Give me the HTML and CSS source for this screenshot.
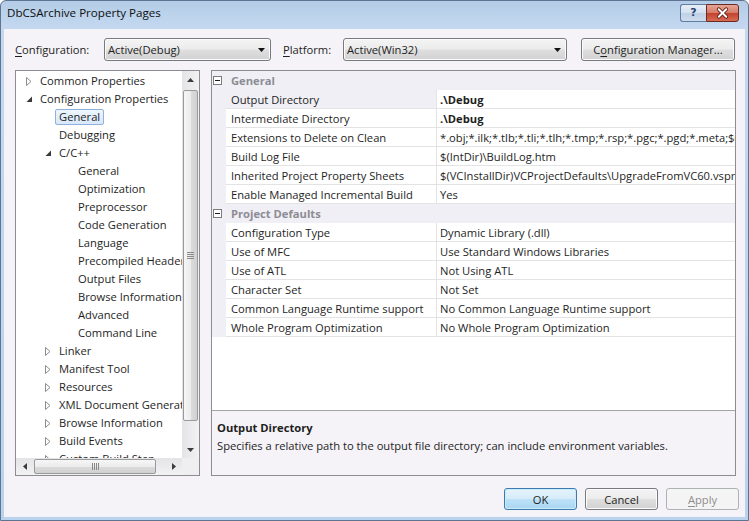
FILE: index.html
```html
<!DOCTYPE html>
<html>
<head>
<meta charset="utf-8">
<title>DbCSArchive Property Pages</title>
<link rel="stylesheet" href="styles.css">
</head>
<body>
<div class="window">
  <div class="titlebar">
    <div class="title">DbCSArchive Property Pages</div>
    <div class="caps">
      <div class="cap help">?</div>
      <div class="cap close">
        <svg width="33" height="18" viewBox="0 0 33 18">
          <path d="M12.5 5 L20.5 13 M20.5 5 L12.5 13" stroke="#5a1408" stroke-width="4" stroke-linecap="round"/>
          <path d="M12.5 5 L20.5 13 M20.5 5 L12.5 13" stroke="#ffffff" stroke-width="2.2" stroke-linecap="round"/>
        </svg>
      </div>
    </div>
  </div>
  <div class="client">
    <div class="config-row">
      <div class="lbl lbl-cfg"><u>C</u>onfiguration:</div>
      <div class="combo combo-cfg"><span class="combo-text">Active(Debug)</span><svg class="drop" width="7" height="4" viewBox="0 0 7 4"><path d="M0 0 L7 0 L3.5 4 Z" fill="#111"/></svg></div>
      <div class="lbl lbl-plat"><u>P</u>latform:</div>
      <div class="combo combo-plat"><span class="combo-text">Active(Win32)</span><svg class="drop" width="7" height="4" viewBox="0 0 7 4"><path d="M0 0 L7 0 L3.5 4 Z" fill="#111"/></svg></div>
      <div class="btn btn-mgr">C<u>o</u>nfiguration Manager...</div>
    </div>

    <div class="main">
      <div class="tree">
        <div class="tree-items">
          <div class="trow lv0"><span class="exp"><svg width="6" height="9" viewBox="0 0 6 9"><path d="M0.5 0.5 L5 4.5 L0.5 8.5 Z" fill="#fff" stroke="#8c8c8c"/></svg></span><span class="tlabel">Common Properties</span></div>
          <div class="trow lv0"><span class="exp open"><svg width="7" height="7" viewBox="0 0 7 7"><path d="M6 0.5 L6 6 L0.5 6 Z" fill="#3a3a3a"/></svg></span><span class="tlabel">Configuration Properties</span></div>
          <div class="trow lv1"><span class="exp"></span><span class="tlabel selected">General</span></div>
          <div class="trow lv1"><span class="exp"></span><span class="tlabel">Debugging</span></div>
          <div class="trow lv1"><span class="exp open"><svg width="7" height="7" viewBox="0 0 7 7"><path d="M6 0.5 L6 6 L0.5 6 Z" fill="#3a3a3a"/></svg></span><span class="tlabel">C/C++</span></div>
          <div class="trow lv2"><span class="exp"></span><span class="tlabel">General</span></div>
          <div class="trow lv2"><span class="exp"></span><span class="tlabel">Optimization</span></div>
          <div class="trow lv2"><span class="exp"></span><span class="tlabel">Preprocessor</span></div>
          <div class="trow lv2"><span class="exp"></span><span class="tlabel">Code Generation</span></div>
          <div class="trow lv2"><span class="exp"></span><span class="tlabel">Language</span></div>
          <div class="trow lv2"><span class="exp"></span><span class="tlabel">Precompiled Headers</span></div>
          <div class="trow lv2"><span class="exp"></span><span class="tlabel">Output Files</span></div>
          <div class="trow lv2"><span class="exp"></span><span class="tlabel">Browse Information</span></div>
          <div class="trow lv2"><span class="exp"></span><span class="tlabel">Advanced</span></div>
          <div class="trow lv2"><span class="exp"></span><span class="tlabel">Command Line</span></div>
          <div class="trow lv1"><span class="exp"><svg width="6" height="9" viewBox="0 0 6 9"><path d="M0.5 0.5 L5 4.5 L0.5 8.5 Z" fill="#fff" stroke="#8c8c8c"/></svg></span><span class="tlabel">Linker</span></div>
          <div class="trow lv1"><span class="exp"><svg width="6" height="9" viewBox="0 0 6 9"><path d="M0.5 0.5 L5 4.5 L0.5 8.5 Z" fill="#fff" stroke="#8c8c8c"/></svg></span><span class="tlabel">Manifest Tool</span></div>
          <div class="trow lv1"><span class="exp"><svg width="6" height="9" viewBox="0 0 6 9"><path d="M0.5 0.5 L5 4.5 L0.5 8.5 Z" fill="#fff" stroke="#8c8c8c"/></svg></span><span class="tlabel">Resources</span></div>
          <div class="trow lv1"><span class="exp"><svg width="6" height="9" viewBox="0 0 6 9"><path d="M0.5 0.5 L5 4.5 L0.5 8.5 Z" fill="#fff" stroke="#8c8c8c"/></svg></span><span class="tlabel">XML Document Generator</span></div>
          <div class="trow lv1"><span class="exp"><svg width="6" height="9" viewBox="0 0 6 9"><path d="M0.5 0.5 L5 4.5 L0.5 8.5 Z" fill="#fff" stroke="#8c8c8c"/></svg></span><span class="tlabel">Browse Information</span></div>
          <div class="trow lv1"><span class="exp"><svg width="6" height="9" viewBox="0 0 6 9"><path d="M0.5 0.5 L5 4.5 L0.5 8.5 Z" fill="#fff" stroke="#8c8c8c"/></svg></span><span class="tlabel">Build Events</span></div>
          <div class="trow lv1"><span class="exp"><svg width="6" height="9" viewBox="0 0 6 9"><path d="M0.5 0.5 L5 4.5 L0.5 8.5 Z" fill="#fff" stroke="#8c8c8c"/></svg></span><span class="tlabel">Custom Build Step</span></div>
        </div>
        <div class="vscroll">
          <div class="sb-btn"><svg width="7" height="4" viewBox="0 0 7 4"><path d="M3.5 0 L7 4 L0 4 Z" fill="#3c3c3c"/></svg></div>
          <div class="sb-track">
            <div class="thumb-v">
              <svg width="7" height="7" viewBox="0 0 7 7"><path d="M0 0.5 H7 M0 2.5 H7 M0 4.5 H7 M0 6.5 H7" stroke="#8a8a8a" stroke-width="1"/></svg>
            </div>
          </div>
          <div class="sb-btn"><svg width="7" height="4" viewBox="0 0 7 4"><path d="M0 0 L7 0 L3.5 4 Z" fill="#3c3c3c"/></svg></div>
        </div>
        <div class="hscroll">
          <div class="sb-btn"><svg width="4" height="7" viewBox="0 0 4 7"><path d="M0 3.5 L4 0 L4 7 Z" fill="#3c3c3c"/></svg></div>
          <div class="sb-track-h">
            <div class="thumb-h">
              <svg width="7" height="7" viewBox="0 0 7 7"><path d="M0.5 0 V7 M2.5 0 V7 M4.5 0 V7 M6.5 0 V7" stroke="#8a8a8a" stroke-width="1"/></svg>
            </div>
          </div>
          <div class="sb-btn"><svg width="4" height="7" viewBox="0 0 4 7"><path d="M0 0 L4 3.5 L0 7 Z" fill="#3c3c3c"/></svg></div>
        </div>
        <div class="corner"></div>
      </div>

      <div class="props">
        <div class="grid">
          <div class="grow cat"><div class="gut"><span class="box"></span></div><div class="catname">General</div></div>
          <div class="grow"><div class="gut"></div><div class="gname sel">Output Directory</div><div class="gval b">.\Debug</div></div>
          <div class="grow"><div class="gut"></div><div class="gname">Intermediate Directory</div><div class="gval b">.\Debug</div></div>
          <div class="grow"><div class="gut"></div><div class="gname">Extensions to Delete on Clean</div><div class="gval">*.obj;*.ilk;*.tlb;*.tli;*.tlh;*.tmp;*.rsp;*.pgc;*.pgd;*.meta;$(TargetPath)</div></div>
          <div class="grow"><div class="gut"></div><div class="gname">Build Log File</div><div class="gval">$(IntDir)\BuildLog.htm</div></div>
          <div class="grow"><div class="gut"></div><div class="gname">Inherited Project Property Sheets</div><div class="gval">$(VCInstallDir)VCProjectDefaults\UpgradeFromVC60.vsprops</div></div>
          <div class="grow"><div class="gut"></div><div class="gname">Enable Managed Incremental Build</div><div class="gval">Yes</div></div>
          <div class="grow cat"><div class="gut"><span class="box"></span></div><div class="catname">Project Defaults</div></div>
          <div class="grow"><div class="gut"></div><div class="gname">Configuration Type</div><div class="gval">Dynamic Library (.dll)</div></div>
          <div class="grow"><div class="gut"></div><div class="gname">Use of MFC</div><div class="gval">Use Standard Windows Libraries</div></div>
          <div class="grow"><div class="gut"></div><div class="gname">Use of ATL</div><div class="gval">Not Using ATL</div></div>
          <div class="grow"><div class="gut"></div><div class="gname">Character Set</div><div class="gval">Not Set</div></div>
          <div class="grow"><div class="gut"></div><div class="gname">Common Language Runtime support</div><div class="gval">No Common Language Runtime support</div></div>
          <div class="grow"><div class="gut"></div><div class="gname">Whole Program Optimization</div><div class="gval">No Whole Program Optimization</div></div>
        </div>
        <div class="desc">
          <div class="desc-title">Output Directory</div>
          <div class="desc-text">Specifies a relative path to the output file directory; can include environment variables.</div>
        </div>
      </div>
    </div>

    <div class="button-row">
      <div class="btn btn-dlg btn-ok">OK</div>
      <div class="btn btn-dlg">Cancel</div>
      <div class="btn btn-dlg btn-disabled"><u>A</u>pply</div>
    </div>
  </div>
</div>
</body>
</html>
```

FILE: styles.css
```css
* { box-sizing: border-box; }
html, body { margin: 0; padding: 0; }
body {
  width: 749px;
  height: 521px;
  overflow: hidden;
  font-family: "Open Sans", "Noto Sans", sans-serif;
  font-size: 11.2px;
  color: #1e1e1e;
  background: #ffffff;
}
u { text-decoration: underline; text-underline-offset: 2px; }

.window {
  width: 749px;
  height: 521px;
  display: flex;
  flex-direction: column;
  border: 1px solid #5d7590;
  border-radius: 6px 6px 0 0;
  background: linear-gradient(#b4cce7, #c4d9f0 28px, #b9d3ee);
}

/* title bar */
.titlebar {
  height: 28px;
  flex: none;
  display: flex;
  justify-content: space-between;
  align-items: flex-start;
  padding: 3px 9px 0 6px;
}
.title {
  font-size: 11.6px;
  line-height: 18px;
  color: #0f0f0f;
}
.caps { display: flex; }
.cap {
  height: 18px;
  border: 1px solid #5f7ea3;
  display: flex;
  align-items: center;
  justify-content: center;
}
.help {
  width: 26px;
  border-radius: 3px 0 0 3px;
  border-right: none;
  background: linear-gradient(#e7eef7, #d3e0ef 50%, #bfd1e6 51%, #cfdcec);
  color: #27446e;
  font-family: "DejaVu Sans", sans-serif;
  font-weight: bold;
  font-size: 11px;
  line-height: 16px;
}
.close {
  width: 33px;
  border-color: #6b2b22;
  border-radius: 0 3px 3px 0;
  background: linear-gradient(#e6a596, #d57a67 50%, #c4422e 51%, #d66b53);
}
.close svg { display: block; }

/* client */
.client {
  flex: 1;
  margin: 0 3px 3px 3px;
  background: #f5f3f7;
  display: flex;
  flex-direction: column;
}

.config-row {
  display: flex;
  align-items: center;
  height: 23px;
  margin: 9px 0 0 11px;
}
.lbl { line-height: 18px; padding-top: 1px; }
.lbl-cfg { width: 89px; }
.lbl-plat { width: 60px; margin-left: 12px; }

.combo, .btn {
  height: 23px;
  border: 1px solid #777a7e;
  border-radius: 3px;
  background: linear-gradient(#f4f4f4, #ececec 48%, #dedede 52%, #d2d2d2);
  box-shadow: inset 0 0 0 1px #fbfbfb;
}
.combo {
  display: flex;
  align-items: center;
  justify-content: space-between;
  padding: 0 5px 0 3px;
}
.combo-text { line-height: 18px; padding-top: 1px; }
.drop { display: block; }
.combo-cfg { width: 167px; }
.combo-plat { width: 224px; }

.btn {
  display: flex;
  align-items: center;
  justify-content: center;
  line-height: 18px;
  padding-top: 1px;
}
.btn-mgr { width: 154px; margin-left: 14px; }

/* main */
.main {
  display: flex;
  gap: 11px;
  height: 406px;
  margin: 9px 0 0 11px;
}

.tree {
  width: 185px;
  height: 406px;
  border: 1px solid #8b8d92;
  background: #ffffff;
  display: grid;
  grid-template-columns: 166px 17px;
  grid-template-rows: 387px 17px;
}
.tree-items {
  overflow: hidden;
  white-space: nowrap;
}
.trow {
  height: 18px;
  display: flex;
  align-items: center;
  padding-top: 2px;
}
.lv0 { padding-left: 10px; }
.lv1 { padding-left: 29px; }
.lv2 { padding-left: 48px; }
.exp {
  width: 10px;
  flex: none;
  display: flex;
  align-items: center;
}
.exp svg { display: block; }
.tlabel {
  display: inline-block;
  line-height: 14px;
  padding: 0 3px;
  border: 1px solid transparent;
  border-radius: 2px;
}
.tlabel.selected {
  border-color: #8fb2dc;
  background: linear-gradient(#eef5fd, #d8e8fa);
}

/* scrollbars */
.vscroll {
  display: flex;
  flex-direction: column;
  background: linear-gradient(to right, #e4e4e6, #f2f2f4);
}
.sb-btn {
  width: 17px;
  height: 17px;
  flex: none;
  display: flex;
  align-items: center;
  justify-content: center;
}
.sb-btn svg { display: block; }
.sb-track { flex: 1; padding: 2px 1px 0 1px; }
.thumb-v {
  height: 331px;
  border: 1px solid #999a9c;
  border-radius: 2px;
  background: linear-gradient(to right, #f6f6f6, #ececec 50%, #dcdcdc 51%, #d0d0d0);
  display: flex;
  align-items: center;
  justify-content: center;
}
.hscroll {
  display: flex;
  background: linear-gradient(#e4e4e6, #f2f2f4);
}
.sb-track-h { flex: 1; padding: 1px 0 1px 1px; }
.thumb-h {
  width: 122px;
  height: 15px;
  border: 1px solid #999a9c;
  border-radius: 2px;
  background: linear-gradient(#f6f6f6, #ececec 50%, #dcdcdc 51%, #d0d0d0);
  display: flex;
  align-items: center;
  justify-content: center;
}
.thumb-v svg, .thumb-h svg { display: block; }
.corner { background: #efeff1; }

/* property grid */
.props {
  width: 525px;
  height: 406px;
  border: 1px solid #8b8d92;
  display: flex;
  flex-direction: column;
}
.grid {
  height: 339px;
  background: #ffffff;
  overflow: hidden;
}
.grow {
  height: 19px;
  display: flex;
  white-space: nowrap;
}
.gut {
  width: 14px;
  flex: none;
  background: #f0eff5;
  display: flex;
  align-items: center;
  padding-left: 1px;
}
.cat { background: #f0eff5; }
.box {
  width: 9px;
  height: 9px;
  border: 1px solid #7c7c7c;
  background: #ffffff;
  display: flex;
  align-items: center;
  justify-content: center;
}
.box::after {
  content: "";
  width: 5px;
  height: 1px;
  background: #1e1e1e;
}
.catname {
  padding-left: 5px;
  padding-top: 1px;
  line-height: 18px;
  font-weight: bold;
  color: #8c8c94;
}
.gname {
  width: 211px;
  flex: none;
  padding-left: 5px;
  padding-top: 1px;
  line-height: 17px;
  border-right: 1px solid #e3e3e6;
  border-bottom: 1px solid #e3e3e6;
  overflow: hidden;
}
.gname.sel { background: #f0eff5; }
.gval {
  flex: 1;
  padding-left: 3px;
  padding-top: 1px;
  line-height: 17px;
  border-bottom: 1px solid #e3e3e6;
  overflow: hidden;
}
.gval.b { font-weight: bold; }

.desc {
  flex: 1;
  border-top: 1px solid #a3a4a8;
  padding: 8px 5px 0 5px;
  background: #f5f3f7;
}
.desc-title { font-weight: bold; line-height: 18px; }
.desc-text { line-height: 18px; }

/* dialog buttons */
.button-row {
  display: flex;
  justify-content: flex-end;
  gap: 8px;
  margin-top: 12px;
  padding-right: 6px;
}
.btn-dlg { width: 73px; height: 22px; }
.btn-ok {
  border-color: #3d7bad;
  background: linear-gradient(#e5f3fb, #d6ecf9 48%, #bde2f7 52%, #a9d6f1);
  box-shadow: inset 0 0 0 1px #c9ecfd;
}
.btn-disabled {
  border-color: #adb2b5;
  background: #f4f4f4;
  box-shadow: none;
  color: #8d8d8d;
}
```
